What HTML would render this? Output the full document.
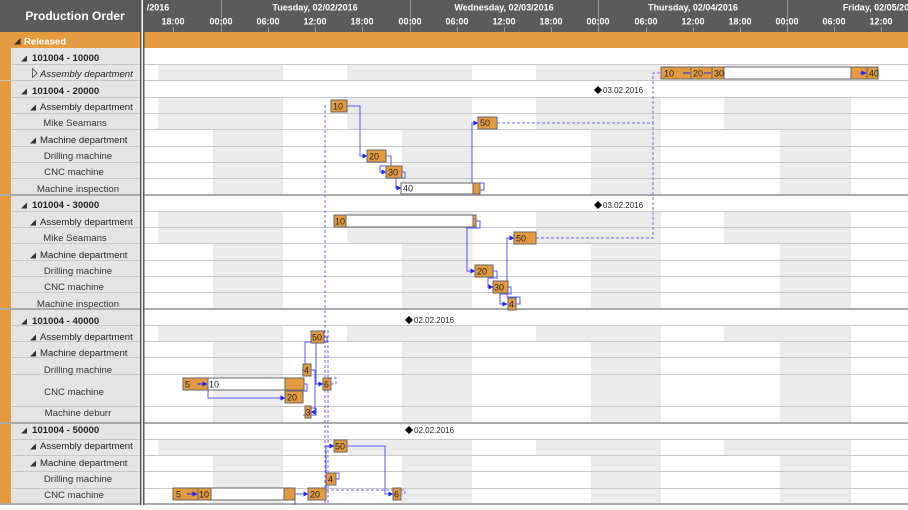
<!DOCTYPE html>
<html><head><meta charset="utf-8"><style>
body{margin:0;width:908px;height:505px;overflow:hidden;background:#fff;font-family:"Liberation Sans",sans-serif}
</style></head><body>
<svg width="908" height="505" xmlns="http://www.w3.org/2000/svg" font-family="Liberation Sans, sans-serif">
<defs>
<marker id="a" markerWidth="5" markerHeight="5" refX="4.5" refY="2.5" orient="auto"><path d="M0,0L5,2.5L0,5z" fill="#2020ff"/></marker>
</defs>
<rect x="0" y="0" width="908" height="505" fill="#fff"/>
<!-- header -->
<rect x="0" y="0" width="908" height="32" fill="#5b5b5b"/>
<text x="75" y="20" fill="#fff" font-size="12" font-weight="bold" text-anchor="middle">Production Order</text>
<g stroke="#999" stroke-width="1">
<line x1="221.5" y1="0" x2="221.5" y2="32"/><line x1="410.5" y1="0" x2="410.5" y2="32"/><line x1="598.5" y1="0" x2="598.5" y2="32"/><line x1="787.5" y1="0" x2="787.5" y2="32"/>
<line x1="173.5" y1="27" x2="173.5" y2="32"/><line x1="268.5" y1="27" x2="268.5" y2="32"/><line x1="315.5" y1="27" x2="315.5" y2="32"/><line x1="362.5" y1="27" x2="362.5" y2="32"/>
<line x1="457.5" y1="27" x2="457.5" y2="32"/><line x1="504.5" y1="27" x2="504.5" y2="32"/><line x1="551.5" y1="27" x2="551.5" y2="32"/>
<line x1="646.5" y1="27" x2="646.5" y2="32"/><line x1="693.5" y1="27" x2="693.5" y2="32"/><line x1="740.5" y1="27" x2="740.5" y2="32"/>
<line x1="834.5" y1="27" x2="834.5" y2="32"/><line x1="881.5" y1="27" x2="881.5" y2="32"/>
</g>
<g fill="#fff" font-size="9" font-weight="bold" text-anchor="middle">
<text x="158" y="10.5">/2016</text>
<text x="315" y="10.5">Tuesday, 02/02/2016</text>
<text x="504" y="10.5">Wednesday, 02/03/2016</text>
<text x="693" y="10.5">Thursday, 02/04/2016</text>
<text x="876" y="10.5">Friday, 02/05/20</text>
<text x="173" y="24.5">18:00</text><text x="221" y="24.5">00:00</text><text x="268" y="24.5">06:00</text><text x="315" y="24.5">12:00</text><text x="362" y="24.5">18:00</text>
<text x="410" y="24.5">00:00</text><text x="457" y="24.5">06:00</text><text x="504" y="24.5">12:00</text><text x="551" y="24.5">18:00</text>
<text x="598" y="24.5">00:00</text><text x="646" y="24.5">06:00</text><text x="693" y="24.5">12:00</text><text x="740" y="24.5">18:00</text>
<text x="787" y="24.5">00:00</text><text x="834" y="24.5">06:00</text><text x="881" y="24.5">12:00</text>
</g>
<!-- released -->
<rect x="0" y="32" width="908" height="16" fill="#e49a3e"/>
<path d="M14,44.5L20.5,38L20.5,44.5z" fill="#333"/>
<text x="24" y="44.5" fill="#fff" font-size="9.6" font-weight="bold">Released</text>

<!-- left panel rows -->
<rect x="0" y="48" width="11" height="457" fill="#e49a3e"/>
<rect x="11" y="48" width="129" height="457" fill="#e4e4e4"/>

<g fill="#ebebeb">
<g transform="translate(0,64.3)"><rect x="158" width="125" height="16.3"/><rect x="347" width="125" height="16.3"/><rect x="536" width="125" height="16.3"/><rect x="724" width="127" height="16.3"/></g>
<g transform="translate(0,96.9)"><rect x="158" width="125" height="32.6"/><rect x="347" width="125" height="32.6"/><rect x="536" width="125" height="32.6"/><rect x="724" width="127" height="32.6"/></g>
<g transform="translate(0,129.5)"><rect x="213" width="70" height="65.2"/><rect x="402" width="70" height="65.2"/><rect x="591" width="70" height="65.2"/><rect x="780" width="71" height="65.2"/></g>
<g transform="translate(0,211)"><rect x="158" width="125" height="32.6"/><rect x="347" width="125" height="32.6"/><rect x="536" width="125" height="32.6"/><rect x="724" width="127" height="32.6"/></g>
<g transform="translate(0,243.6)"><rect x="213" width="70" height="65.2"/><rect x="402" width="70" height="65.2"/><rect x="591" width="70" height="65.2"/><rect x="780" width="71" height="65.2"/></g>
<g transform="translate(0,325.1)"><rect x="158" width="125" height="16.3"/><rect x="347" width="125" height="16.3"/><rect x="536" width="125" height="16.3"/><rect x="724" width="127" height="16.3"/></g>
<g transform="translate(0,341.4)"><rect x="213" width="70" height="81.5"/><rect x="402" width="70" height="81.5"/><rect x="591" width="70" height="81.5"/><rect x="780" width="71" height="81.5"/></g>
<g transform="translate(0,439.2)"><rect x="158" width="125" height="16.3"/><rect x="347" width="125" height="16.3"/><rect x="536" width="125" height="16.3"/><rect x="724" width="127" height="16.3"/></g>
<g transform="translate(0,455.5)"><rect x="213" width="70" height="49.5"/><rect x="402" width="70" height="49.5"/><rect x="591" width="70" height="49.5"/><rect x="780" width="71" height="49.5"/></g>
</g>

<!-- row lines -->
<g stroke="#c8c8c8" stroke-width="1">
<line x1="11" x2="908" y1="64.5" y2="64.5"/><line x1="0" x2="908" y1="80.5" y2="80.5"/><line x1="11" x2="908" y1="97.5" y2="97.5"/>
<line x1="11" x2="908" y1="113.5" y2="113.5"/><line x1="11" x2="908" y1="129.5" y2="129.5"/><line x1="11" x2="908" y1="146.5" y2="146.5"/>
<line x1="11" x2="908" y1="162.5" y2="162.5"/><line x1="11" x2="908" y1="178.5" y2="178.5"/><line x1="0" x2="908" y1="195" y2="195" stroke="#aaa" stroke-width="2"/>
<line x1="11" x2="908" y1="211.5" y2="211.5"/><line x1="11" x2="908" y1="227.5" y2="227.5"/><line x1="11" x2="908" y1="243.5" y2="243.5"/>
<line x1="11" x2="908" y1="260.5" y2="260.5"/><line x1="11" x2="908" y1="276.5" y2="276.5"/><line x1="11" x2="908" y1="292.5" y2="292.5"/>
<line x1="0" x2="908" y1="309" y2="309" stroke="#aaa" stroke-width="2"/><line x1="11" x2="908" y1="325.5" y2="325.5"/><line x1="11" x2="908" y1="341.5" y2="341.5"/>
<line x1="11" x2="908" y1="357.5" y2="357.5"/><line x1="11" x2="908" y1="374.5" y2="374.5"/><line x1="11" x2="908" y1="406.5" y2="406.5"/>
<line x1="0" x2="908" y1="423" y2="423" stroke="#aaa" stroke-width="2"/><line x1="11" x2="908" y1="439.5" y2="439.5"/><line x1="11" x2="908" y1="455.5" y2="455.5"/>
<line x1="11" x2="908" y1="471.5" y2="471.5"/><line x1="11" x2="908" y1="488.5" y2="488.5"/>
</g>
<line x1="0" x2="908" y1="504" y2="504" stroke="#aaa" stroke-width="2"/>
<rect x="140" y="0" width="1.5" height="505" fill="#555"/>
<rect x="141.5" y="0" width="1.5" height="505" fill="#fff"/>
<rect x="143" y="0" width="1.5" height="505" fill="#555"/>

<!-- left texts -->
<g font-size="9.6" fill="#222">
<g font-weight="bold">
<path d="M21,61.5L27,55.5L27,61.5z" fill="#333"/><text x="32" y="61">101004 - 10000</text>
<path d="M21,94.5L27,88.5L27,94.5z" fill="#333"/><text x="32" y="94">101004 - 20000</text>
<path d="M21,208.5L27,202.5L27,208.5z" fill="#333"/><text x="32" y="208">101004 - 30000</text>
<path d="M21,324.5L27,318.5L27,324.5z" fill="#333"/><text x="32" y="324">101004 - 40000</text>
<path d="M21,433.5L27,427.5L27,433.5z" fill="#333"/><text x="32" y="433">101004 - 50000</text>
</g>
<path d="M32.5,68.5L37,73L32.5,77.5z" fill="none" stroke="#444" stroke-width="0.8"/>
<text x="40" y="77" font-style="italic">Assembly department</text>
<path d="M30,110.5L36,104.5L36,110.5z" fill="#333"/><text x="40" y="110">Assembly department</text>
<path d="M30,143.5L36,137.5L36,143.5z" fill="#333"/><text x="40" y="143">Machine department</text>
<path d="M30,225.5L36,219.5L36,225.5z" fill="#333"/><text x="40" y="225">Assembly department</text>
<path d="M30,258.5L36,252.5L36,258.5z" fill="#333"/><text x="40" y="258">Machine department</text>
<path d="M30,340.5L36,334.5L36,340.5z" fill="#333"/><text x="40" y="340">Assembly department</text>
<path d="M30,356.5L36,350.5L36,356.5z" fill="#333"/><text x="40" y="356">Machine department</text>
<path d="M30,449.5L36,443.5L36,449.5z" fill="#333"/><text x="40" y="449">Assembly department</text>
<path d="M30,466.5L36,460.5L36,466.5z" fill="#333"/><text x="40" y="466">Machine department</text>
<g text-anchor="middle" fill="#333">
<text x="75" y="126">Mike Seamans</text><text x="78" y="159">Drilling machine</text><text x="74" y="175">CNC machine</text><text x="78" y="192">Machine inspection</text>
<text x="75" y="241">Mike Seamans</text><text x="78" y="274">Drilling machine</text><text x="74" y="290">CNC machine</text><text x="78" y="307">Machine inspection</text>
<text x="78" y="373">Drilling machine</text><text x="74" y="395">CNC machine</text><text x="78" y="416">Machine deburr</text>
<text x="78" y="482">Drilling machine</text><text x="74" y="498">CNC machine</text>
</g>
</g>

<!-- milestones -->
<g font-size="8" fill="#222">
<path d="M598,86L602,90L598,94L594,90z" fill="#000"/><text x="603" y="93">03.02.2016</text>
<path d="M598,201L602,205L598,209L594,205z" fill="#000"/><text x="603" y="208">03.02.2016</text>
<path d="M409,316L413,320L409,324L405,320z" fill="#000"/><text x="414" y="323">02.02.2016</text>
<path d="M409,426L413,430L409,434L405,430z" fill="#000"/><text x="414" y="433">02.02.2016</text>
</g>

<g stroke="#6a6aff" stroke-width="1" stroke-dasharray="3,2" fill="none">
<path d="M325,105V505"/>
<path d="M497,123H653V73H660"/>
<path d="M536,238H653V123"/>
<path d="M331,384H336V378H331"/>
<path d="M326,490H405V494H402"/>
<path d="M328,330V505"/>
</g>
<g stroke="#5555ff" stroke-width="1" fill="none">
<path d="M347,106H360V156H367" marker-end="url(#a)"/>
<path d="M386,156H391V166H380V172H386" marker-end="url(#a)"/>
<path d="M402,172H405V178H396V188H401" marker-end="url(#a)"/>
<path d="M480,183H484V190H472V123H478" marker-end="url(#a)"/>
<path d="M476,221H480V228H467V271H475" marker-end="url(#a)"/>
<path d="M493,271H497V278H488V287H493" marker-end="url(#a)"/>
<path d="M508,287H511V294H500V304H507" marker-end="url(#a)"/>
<path d="M516,304H520V297H507V238H514" marker-end="url(#a)"/>
<path d="M324,337H327V342H305V370H302" />
<path d="M303,384H307V391H295V397H285"/>
<path d="M208,384V398H285" marker-end="url(#a)"/>
<path d="M311,370H315V412H311" marker-end="url(#a)"/>
<path d="M316,337V384H323" marker-end="url(#a)"/>
<path d="M303,415H316V408H311"/>
<path d="M347,446H385V494H393" marker-end="url(#a)"/>
<path d="M336,479H339V473H326V494H320"/>
<path d="M326,494V446H334" marker-end="url(#a)"/>
<path d="M198,488V494H204"/>
<path d="M198,490H295V494H308" marker-end="url(#a)"/>
<path d="M295,505V494"/>
</g>

<g stroke="#666" stroke-width="1" font-size="9" fill="#222">
<rect x="661" y="67" width="217" height="12" fill="#fff"/>
<rect x="661" y="67" width="63" height="12" fill="#e49a3e"/>
<rect x="851" y="67" width="27" height="12" fill="#e49a3e"/>
<line x1="691" y1="67" x2="691" y2="79"/><line x1="712" y1="67" x2="712" y2="79"/><line x1="867" y1="67" x2="867" y2="79"/>
<g stroke="none"><text x="664" y="76.5">10</text><text x="693" y="76.5">20</text><text x="714" y="76.5">30</text><text x="869" y="76.5">40</text></g>
<path d="M683,73H690M704,73H711M860,73H866" stroke="#2020ff" marker-end="url(#a)"/>

<rect x="331" y="100" width="16" height="12" fill="#e49a3e"/><text x="333" y="109.5" stroke="none">10</text>
<rect x="478" y="117" width="19" height="12" fill="#e49a3e"/><text x="480" y="126" stroke="none">50</text>
<rect x="367" y="150" width="19" height="12" fill="#e49a3e"/><text x="369" y="159.5" stroke="none">20</text>
<rect x="386" y="166" width="16" height="12" fill="#e49a3e"/><text x="388" y="175.5" stroke="none">30</text>
<rect x="401" y="183" width="79" height="11" fill="#fff"/><rect x="473" y="183" width="7" height="11" fill="#e49a3e"/><text x="403" y="191.5" stroke="none">40</text>

<rect x="334" y="215" width="142" height="12" fill="#fff"/><rect x="334" y="215" width="12" height="12" fill="#e49a3e"/><rect x="473" y="215" width="3" height="12" fill="#e49a3e"/><text x="335" y="224.5" stroke="none">10</text>
<rect x="514" y="232" width="22" height="12" fill="#e49a3e"/><text x="516" y="241.5" stroke="none">50</text>
<rect x="475" y="265" width="18" height="12" fill="#e49a3e"/><text x="477" y="274.5" stroke="none">20</text>
<rect x="493" y="281" width="15" height="12" fill="#e49a3e"/><text x="494" y="290.5" stroke="none">30</text>
<rect x="508" y="298" width="8" height="12" fill="#e49a3e"/><text x="509" y="307.5" stroke="none">4</text>

<rect x="311" y="331" width="13" height="12" fill="#e49a3e"/><text x="312" y="340.5" stroke="none">50</text>
<rect x="303" y="364" width="8" height="12" fill="#e49a3e"/><text x="304" y="373.5" stroke="none">4</text>
<rect x="183" y="378" width="121" height="12" fill="#fff"/><rect x="183" y="378" width="25" height="12" fill="#e49a3e"/><rect x="285" y="378" width="19" height="12" fill="#e49a3e"/>
<text x="185" y="387.5" stroke="none">5</text><text x="209" y="387.5" stroke="none">10</text>
<path d="M197,384H207" stroke="#2020ff" marker-end="url(#a)"/>
<rect x="323" y="378" width="8" height="12" fill="#e49a3e"/><text x="324" y="387.5" stroke="none">6</text>
<rect x="285" y="391" width="18" height="12" fill="#e49a3e"/><text x="287" y="400.5" stroke="none">20</text>
<rect x="305" y="406" width="6" height="12" fill="#e49a3e"/><text x="305.5" y="415.5" stroke="none">3</text>

<rect x="334" y="440" width="13" height="12" fill="#e49a3e"/><text x="335" y="449.5" stroke="none">50</text>
<rect x="326" y="473" width="10" height="12" fill="#e49a3e"/><text x="328" y="482.5" stroke="none">4</text>
<rect x="173" y="488" width="122" height="12" fill="#fff"/><rect x="173" y="488" width="25" height="12" fill="#e49a3e"/><rect x="284" y="488" width="11" height="12" fill="#e49a3e"/>
<rect x="198" y="488" width="13" height="12" fill="#e49a3e"/>
<text x="176" y="497.5" stroke="none">5</text><text x="199" y="497.5" stroke="none">10</text>
<path d="M187,494H197" stroke="#2020ff" marker-end="url(#a)"/>
<rect x="308" y="488" width="18" height="12" fill="#e49a3e"/><text x="310" y="497.5" stroke="none">20</text>
<rect x="393" y="488" width="8" height="12" fill="#e49a3e"/><text x="394" y="497.5" stroke="none">6</text>
</g>
</svg>
</body></html>
